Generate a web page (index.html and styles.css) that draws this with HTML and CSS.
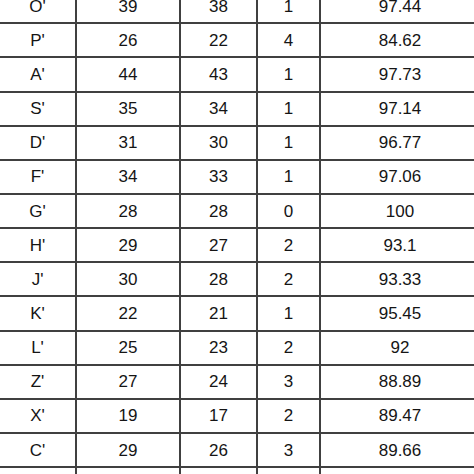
FILE: index.html
```html
<!DOCTYPE html>
<html>
<head>
<meta charset="utf-8">
<link rel="stylesheet" href="styles.css">
</head>
<body>
<div class="table">
  <div class="c">O'</div><div class="c">39</div><div class="c">38</div><div class="c">1</div><div class="c">97.44</div>
  <div class="c">P'</div><div class="c">26</div><div class="c">22</div><div class="c">4</div><div class="c">84.62</div>
  <div class="c">A'</div><div class="c">44</div><div class="c">43</div><div class="c">1</div><div class="c">97.73</div>
  <div class="c">S'</div><div class="c">35</div><div class="c">34</div><div class="c">1</div><div class="c">97.14</div>
  <div class="c">D'</div><div class="c">31</div><div class="c">30</div><div class="c">1</div><div class="c">96.77</div>
  <div class="c">F'</div><div class="c">34</div><div class="c">33</div><div class="c">1</div><div class="c">97.06</div>
  <div class="c">G'</div><div class="c">28</div><div class="c">28</div><div class="c">0</div><div class="c">100</div>
  <div class="c">H'</div><div class="c">29</div><div class="c">27</div><div class="c">2</div><div class="c">93.1</div>
  <div class="c">J'</div><div class="c">30</div><div class="c">28</div><div class="c">2</div><div class="c">93.33</div>
  <div class="c">K'</div><div class="c">22</div><div class="c">21</div><div class="c">1</div><div class="c">95.45</div>
  <div class="c">L'</div><div class="c">25</div><div class="c">23</div><div class="c">2</div><div class="c">92</div>
  <div class="c">Z'</div><div class="c">27</div><div class="c">24</div><div class="c">3</div><div class="c">88.89</div>
  <div class="c">X'</div><div class="c">19</div><div class="c">17</div><div class="c">2</div><div class="c">89.47</div>
  <div class="c">C'</div><div class="c">29</div><div class="c">26</div><div class="c">3</div><div class="c">89.66</div>
  <div class="c"></div><div class="c"></div><div class="c"></div><div class="c"></div><div class="c"></div>
</div>
</body>
</html>
```
FILE: styles.css
```css
html, body {
  margin: 0;
  padding: 0;
  background: #ffffff;
  overflow: hidden;
}
.table {
  display: grid;
  grid-template-columns: 75px 102px 75px 61px 158px;
  grid-auto-rows: 32.15px;
  gap: 2px;
  padding: 2px;
  width: max-content;
  background: #404040;
  margin-top: -11.85px;
  margin-left: -2px;
  font-family: "Liberation Sans", Arial, sans-serif;
  font-size: 17px;
  color: #151515;
}
.c {
  background: #ffffff;
  display: flex;
  align-items: center;
  justify-content: center;
  line-height: 1;
}
```
